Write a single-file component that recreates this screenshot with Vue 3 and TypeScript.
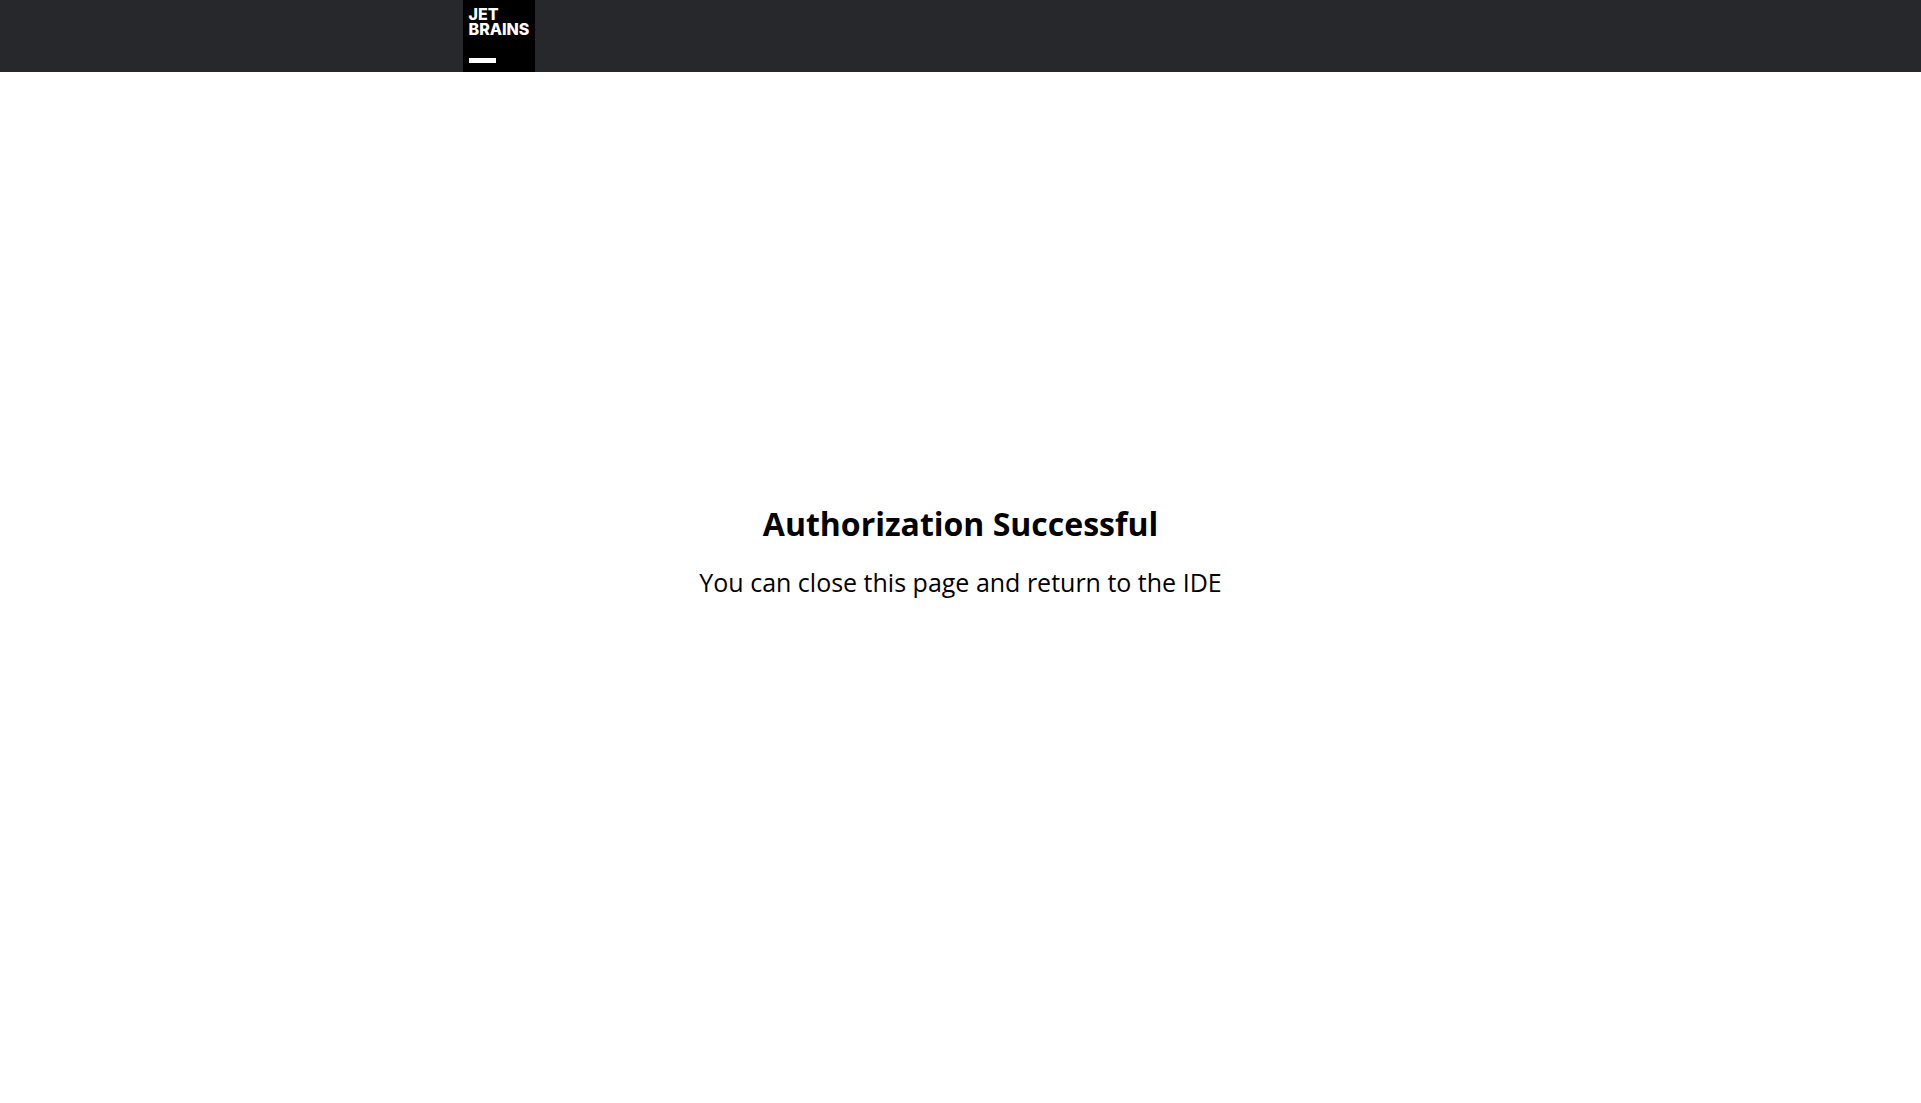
<script setup lang="ts">
const title: string = 'Authorization Successful'
const message: string = 'You can close this page and return to the IDE'
</script>

<template>
  <div class="page">
    <header class="header">
      <div class="container">
        <div class="logo">
          <span class="word">JET<br />BRAINS</span>
          <span class="bar"></span>
        </div>
      </div>
    </header>
    <main class="content">
      <h1 class="title">{{ title }}</h1>
      <p class="message">{{ message }}</p>
    </main>
  </div>
</template>

<style>
body {
  margin: 0;
  background: #fff;
}
</style>

<style scoped>
.page {
  min-height: 100vh;
  display: flex;
  flex-direction: column;
  color: #000;
  font-family: "Open Sans", "Noto Sans", sans-serif;
}

.header {
  height: 72px;
  background: #27282c;
}

.container {
  max-width: 996px;
  margin: 0 auto;
}

.logo {
  box-sizing: border-box;
  display: flex;
  flex-direction: column;
  width: 72px;
  height: 72px;
  padding: 7px 5px 9px 6px;
  background: #000;
}

.word {
  color: #fff;
  font-family: Inter, sans-serif;
  font-size: 16px;
  line-height: 15px;
  font-weight: 800;
}

.bar {
  width: 27px;
  height: 5px;
  margin-top: auto;
  background: #fff;
}

.content {
  flex: 1;
  display: flex;
  flex-direction: column;
  align-items: center;
  justify-content: center;
  gap: 16px;
  padding-bottom: 76px;
  text-align: center;
}

.title {
  margin: 0;
  font-size: 32px;
  line-height: 48px;
  font-weight: 700;
}

.message {
  margin: 0;
  font-size: 25px;
  line-height: 36px;
}
</style>
